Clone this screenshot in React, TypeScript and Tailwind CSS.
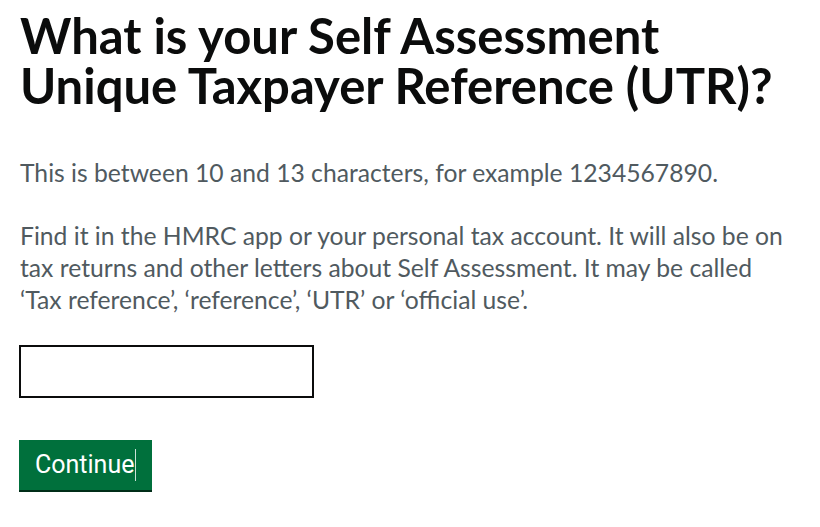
export default function App() {
  return (
    <div className="min-h-screen bg-white px-[20px] pt-[10px]" style={{ fontFamily: "Lato, 'Noto Sans', sans-serif" }}>
      <h1 className="text-[49px] leading-[50px] font-bold text-[#0b0c0c]">
        What is your Self Assessment
        <br />
        Unique Taxpayer Reference (UTR)?
      </h1>

      <p className="mt-[47px] text-[24.7px] leading-[32px] text-[#505a5f]">
        This is between 10 and 13 characters, for example 1234567890.
      </p>
      <p className="mt-[31px] max-w-[772px] text-[24.7px] leading-[32px] text-[#505a5f]">
        Find it in the HMRC app or your personal tax account. It will also be on tax returns and other letters about Self
        Assessment. It may be called ‘Tax reference’, ‘reference’, ‘UTR’ or ‘official use’.
      </p>

      <input
        type="text"
        aria-label="UTR"
        className="mt-[29px] ml-[-1px] block h-[53px] w-[295px] border-2 border-[#0b0c0c] bg-white px-2 text-[24px] outline-none"
      />

      <button
        type="button"
        className="mt-[42px] ml-[-1px] flex h-[50px] items-center bg-[#00703c] pl-[16px] pr-[16px] text-[25px] text-white shadow-[0_2px_0_#002d18]"
        style={{ fontFamily: "Roboto, 'Liberation Sans', sans-serif" }}
      >
        Continue
        <span className="ml-[1px] inline-block h-[32px] w-px bg-white/80" />
      </button>
    </div>
  );
}
